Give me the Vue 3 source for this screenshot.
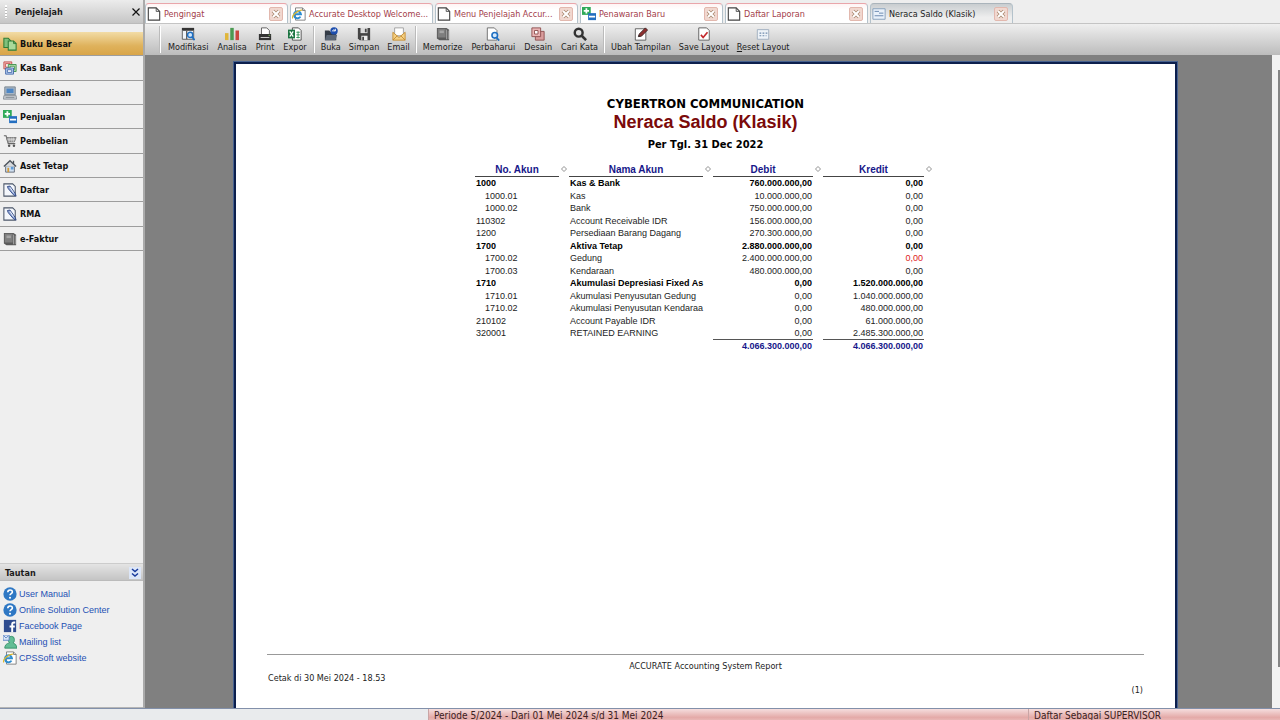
<script setup>
const menu = [
  ['Buku Besar', 'copy'],
  ['Kas Bank', 'cash'],
  ['Persediaan', 'computer'],
  ['Penjualan', 'plusminus'],
  ['Pembelian', 'cart'],
  ['Aset Tetap', 'house'],
  ['Daftar', 'listdoc'],
  ['RMA', 'listdoc'],
  ['e-Faktur', 'book'],
]
const links = [
  ['User Manual', 'help'],
  ['Online Solution Center', 'help'],
  ['Facebook Page', 'facebook'],
  ['Mailing list', 'mail'],
  ['CPSSoft website', 'ie'],
]
const tabs = [
  { title: 'Pengingat', icon: 'page', close: true },
  { title: 'Accurate Desktop Welcome...', icon: 'ie', close: false },
  { title: 'Menu Penjelajah Accur...', icon: 'page', close: true },
  { title: 'Penawaran Baru', icon: 'plusminus', close: true },
  { title: 'Daftar Laporan', icon: 'page', close: true },
  { title: 'Neraca Saldo (Klasik)', icon: 'form', close: true, active: true },
]
const tools = [
  [['Modifikasi', 'modify'], ['Analisa', 'chart'], ['Print', 'print'], ['Expor', 'excel']],
  [['Buka', 'open'], ['Simpan', 'save'], ['Email', 'email']],
  [['Memorize', 'book'], ['Perbaharui', 'refresh'], ['Desain', 'design'], ['Cari Kata', 'search']],
  [['Ubah Tampilan', 'edit'], ['Save La', 'check', 'y', 'out'], ['', 'reset', 'R', 'eset Layout']],
]
const rows = [
  { no: '1000', name: 'Kas & Bank', d: '760.000.000,00', k: '0,00', bold: true },
  { no: '1000.01', name: 'Kas', d: '10.000.000,00', k: '0,00', child: true },
  { no: '1000.02', name: 'Bank', d: '750.000.000,00', k: '0,00', child: true },
  { no: '110302', name: 'Account Receivable IDR', d: '156.000.000,00', k: '0,00' },
  { no: '1200', name: 'Persediaan Barang Dagang', d: '270.300.000,00', k: '0,00' },
  { no: '1700', name: 'Aktiva Tetap', d: '2.880.000.000,00', k: '0,00', bold: true },
  { no: '1700.02', name: 'Gedung', d: '2.400.000.000,00', k: '0,00', child: true, red: true },
  { no: '1700.03', name: 'Kendaraan', d: '480.000.000,00', k: '0,00', child: true },
  { no: '1710', name: 'Akumulasi Depresiasi Fixed As', d: '0,00', k: '1.520.000.000,00', bold: true },
  { no: '1710.01', name: 'Akumulasi Penyusutan Gedung', d: '0,00', k: '1.040.000.000,00', child: true },
  { no: '1710.02', name: 'Akumulasi Penyusutan Kendaraa', d: '0,00', k: '480.000.000,00', child: true },
  { no: '210102', name: 'Account Payable IDR', d: '0,00', k: '61.000.000,00' },
  { no: '320001', name: 'RETAINED EARNING', d: '0,00', k: '2.485.300.000,00' },
]
</script>

<template>
  <div class="app">
    <svg class="defs" aria-hidden="true">
      <symbol id="i-copy" viewBox="0 0 16 16">
        <path d="M1 1.500h5l3 3V12H1z" fill="#7fc07c" stroke="#2f7d36" stroke-width="1.200" />
        <path d="M6 4.500h6l3 3V15H6z" fill="#a9d99a" stroke="#2f7d36" stroke-width="1.200" />
        <path d="M12 4.500v3h3" fill="none" stroke="#2f7d36" />
      </symbol>
      <symbol id="i-cash" viewBox="0 0 16 16">
        <path d="M1 1h9v8H1z" fill="#f5b7b4" stroke="#c0504d" />
        <path d="M3 3h5v4H3z" fill="#fff" stroke="#c0504d" />
        <path d="M6 4h9v8H6z" fill="#b8dfb3" stroke="#3c8f49" />
        <path d="M8 6h5v4H8z" fill="#fff" stroke="#3c8f49" />
        <path d="M3 8h9v7H3z" fill="#b9cdef" stroke="#3e66a8" />
        <path d="M5 10h5v3H5z" fill="#fff" stroke="#3e66a8" />
      </symbol>
      <symbol id="i-computer" viewBox="0 0 16 16">
        <path d="M2 1h12v9H2z" fill="#a9b6c4" stroke="#74808d" />
        <path d="M4 3h8v5H4z" fill="#4d86c4" />
        <path d="M1 11h14l.5 4H.5z" fill="#c9ced4" stroke="#858c94" />
        <path d="M3 13h10" stroke="#7d848c" />
      </symbol>
      <symbol id="i-plusminus" viewBox="0 0 16 16">
        <path d="M0 0h10v9H0z" fill="#2faa59" />
        <path d="M5 1.500v6M2 4.500h6" stroke="#fff" stroke-width="2" />
        <path d="M7 7h9v8H7z" fill="#246fc0" />
        <path d="M8 11h7" stroke="#fff" stroke-width="2" />
      </symbol>
      <symbol id="i-cart" viewBox="0 0 16 16">
        <path d="M1 2h2.500l2.500 9h8" fill="none" stroke="#666" stroke-width="1.300" />
        <path d="M4 4h11l-2 5H5.500z" fill="#a8a8a8" stroke="#777" />
        <path d="M7 4v5M10 4v5M12 4v5M5 6.500h9" stroke="#e4e4e4" stroke-width=".6" />
        <circle cx="7" cy="13.500" r="1.400" fill="#555" /><circle cx="12.500" cy="13.500" r="1.400" fill="#555" />
      </symbol>
      <symbol id="i-house" viewBox="0 0 16 16">
        <path d="M3 8h10v7H3z" fill="#cfdff0" stroke="#5c6470" />
        <path d="M1 8.500 8 2l7 6.500" fill="#d5d9dd" stroke="#4c535c" stroke-width="1.600" />
        <path d="M12 2v4" stroke="#4c535c" stroke-width="1.500" />
        <path d="M5 10h2v5H5z" fill="#d59a35" /><path d="M9 9h3v3H9z" fill="#5e9bd8" />
      </symbol>
      <symbol id="i-listdoc" viewBox="0 0 16 16">
        <path d="M1 1h10l3 3v11H1z" fill="#f4f7fc" stroke="#4b5668" stroke-width="1.200" />
        <path d="m5 4 3-.5 6 8.500 1 3-3-1.500-6-7z" fill="#8ea5d6" stroke="#2c4381" />
        <path d="m8 5 4 6" stroke="#fff" />
      </symbol>
      <symbol id="i-book" viewBox="0 0 16 16">
        <path d="m1 1 11 0 3 2v12H4l-3-2z" fill="#5a5a5a" />
        <path d="M2 2h9v10H2z" fill="#7e7e7e" /><path d="M4 4h5v3H4z" fill="#a5a5a5" />
        <path d="M12 3v11M14 4v10" stroke="#c5c5c5" stroke-width=".7" />
      </symbol>
      <symbol id="i-help" viewBox="0 0 16 16">
        <circle cx="8" cy="8" r="7.600" fill="#2f78c4" />
        <path d="M5.500 6c0-3.500 5.200-3.300 5.200-.4C10.700 7.500 8 7.500 8 9.500" fill="none" stroke="#fff" stroke-width="1.900" />
        <circle cx="8" cy="12.300" r="1.200" fill="#fff" />
      </symbol>
      <symbol id="i-facebook" viewBox="0 0 16 16">
        <path d="M1 1h14v14H1z" fill="#2f4c8f" />
        <path d="M14 4h-1.500Q10.500 4 10.500 6v9M7.500 8.500h6" fill="none" stroke="#fff" stroke-width="2.200" />
      </symbol>
      <symbol id="i-mail" viewBox="0 0 16 16">
        <path d="M6 5q0-3.500 3.500-3.500T13 5t-1.500 4q4 1 4.500 6H2q0-5 5.500-6Q6 8 6 5z" fill="#63bd95" stroke="#369069" />
        <path d="M0 0h7v6H0z" fill="#dce8fa" stroke="#557fc1" /><path d="m1 1 2.500 2.500L6 1" fill="none" stroke="#557fc1" />
      </symbol>
      <symbol id="i-ie" viewBox="0 0 16 16">
        <path d="M4 1h8l3 3v11H4z" fill="#fff" stroke="#777" /><path d="M12 1v3h3" fill="none" stroke="#777" />
        <path d="M9.700 11A4 4 0 1 1 10.200 8.300H3" fill="none" stroke="#2d8cd0" stroke-width="2.200" />
        <path d="M1 13C-1 10 7 3 11.500 3.500" fill="none" stroke="#dfb92e" stroke-width="1.400" />
      </symbol>
      <symbol id="i-page" viewBox="0 0 16 16">
        <path d="M1.500 1h9l4 4v10h-13z" fill="#fff" stroke="#444" stroke-width="1.300" /><path d="M10.500 1v4h4" fill="none" stroke="#444" />
      </symbol>
      <symbol id="i-form" viewBox="0 0 16 16">
        <path d="M1 2h14v12H1z" fill="#e9f1fa" stroke="#7f9ab8" />
        <path d="M3 5h5M3 10h10" stroke="#5b7ea8" /><path d="M8 7h5" stroke="#5b7ea8" />
      </symbol>
      <symbol id="i-modify" viewBox="0 0 16 16">
        <path d="M1 1h14v3H1z" fill="#333" /><path d="M1.500 4h5v10h-5zM6.500 4h8v10h-8z" fill="#f2f5f8" stroke="#555" />
        <circle cx="10.500" cy="9" r="3" fill="#cfe5fb" stroke="#1e6fc2" stroke-width="1.700" /><path d="m12.500 11 3 4" stroke="#1e6fc2" stroke-width="2" />
      </symbol>
      <symbol id="i-chart" viewBox="0 0 16 16">
        <path d="M0 7h4v8H0z" fill="#e0b63b" /><path d="M6 1h4v14H6z" fill="#4b9a52" /><path d="M12 4h4v11h-4z" fill="#c9483f" />
      </symbol>
      <symbol id="i-print" viewBox="0 0 16 16">
        <path d="M4 8V1h6l3 3v4" fill="#fff" stroke="#555" /><path d="M1 8h14v7H1z" fill="#333" />
        <path d="M3 12h10" stroke="#ddd" /><path d="M12 9.500h2" stroke="#77b85c" />
      </symbol>
      <symbol id="i-excel" viewBox="0 0 16 16">
        <path d="M5 1h7l3 3v11H5z" fill="#fff" stroke="#444" /><path d="M0 3h8v10H0z" fill="#1c7442" />
        <path d="m2 5 4 6M6 5l-4 6" stroke="#fff" stroke-width="1.400" /><path d="M9.500 6h4M9.500 9h4M9.500 12h4M11.500 5v8" stroke="#2b8f54" />
      </symbol>
      <symbol id="i-open" viewBox="0 0 16 16">
        <path d="M1 4h5l2 2h6v9H1z" fill="#343b46" /><path d="M3 9h12l-2 6H1z" fill="#5b6675" />
        <circle cx="11.500" cy="4.500" r="4.200" fill="#1d4eae" /><path d="M9 5q2-3 4-1M13 2v2.500h-2.500" fill="none" stroke="#fff" />
      </symbol>
      <symbol id="i-save" viewBox="0 0 16 16">
        <path d="M1 1h14v14H3l-2-2z" fill="#454545" /><path d="M4 1h8v6H4z" fill="#ddd" /><path d="M5 10h7v5H5z" fill="#eee" /><path d="M6 11h2v4H6z" fill="#444" /><path d="M9 2h2v4H9z" fill="#444" />
      </symbol>
      <symbol id="i-email" viewBox="0 0 16 16">
        <path d="M3 1h10v9H3z" fill="#fff" stroke="#9b9b9b" /><path d="M1 6v9h14V6l-7 6z" fill="#f3cf83" stroke="#c58b2f" /><path d="m1 15 5-5M15 15l-5-5" stroke="#c58b2f" />
      </symbol>
      <symbol id="i-refresh" viewBox="0 0 16 16">
        <path d="M1.500 1h8l3 3v11h-11z" fill="#fff" stroke="#666" /><circle cx="10" cy="9.500" r="3.200" fill="#d6e9fb" stroke="#1e6fc2" stroke-width="1.800" /><path d="m12 12 3 3.500" stroke="#1e6fc2" stroke-width="2" />
      </symbol>
      <symbol id="i-design" viewBox="0 0 16 16">
        <path d="M5 5h10v10H5z" fill="#d99c9c" stroke="#8a4a4a" /><path d="M1 1h10v10H1z" fill="#eab5b5" stroke="#8a4a4a" /><path d="M4 4h4v4H4z" fill="#fff" stroke="#8a4a4a" />
      </symbol>
      <symbol id="i-search" viewBox="0 0 16 16">
        <circle cx="6.500" cy="6.500" r="4.500" fill="none" stroke="#333" stroke-width="2.800" /><path d="m10 10 5 5" stroke="#333" stroke-width="3" />
      </symbol>
      <symbol id="i-edit" viewBox="0 0 16 16">
        <path d="M1.500 2h12v13h-12z" fill="#fff" stroke="#555" /><path d="m5 11 1-3 7-7 2.500 2.500-7 7z" fill="#8e2f2f" stroke="#3b2323" /><path d="m5 11 2-.5-1.500-1.500z" fill="#222" />
      </symbol>
      <symbol id="i-check" viewBox="0 0 16 16">
        <path d="M2 1h9l3 3v11H2z" fill="#fff" stroke="#555" /><path d="m4.500 9 2.500 3 5-6" fill="none" stroke="#c3272b" stroke-width="1.900" />
      </symbol>
      <symbol id="i-reset" viewBox="0 0 16 16">
        <path d="M1.500 3h13v11h-13z" fill="#eef3f8" stroke="#9cacbd" /><path d="M4 7h2M4 10h2M7.500 7h2M7.500 10h2M11 7h2M11 10h1" stroke="#6c89ab" stroke-width="1.300" />
      </symbol>
    </svg>

    <aside class="side">
      <header class="side-head">
        <span class="grip"></span>
        <h2>Penjelajah</h2>
        <button class="side-close" aria-label="Tutup">
          <svg viewBox="0 0 8 8"><path d="m.5.5 7 7M7.500.5l-7 7" stroke="#111" stroke-width="1.200" /></svg>
        </button>
      </header>
      <nav class="menu">
        <button v-for="(m, i) in menu" :key="m[0]" :class="{ on: i === 0 }">
          <svg class="ico"><use :href="'#i-' + m[1]" /></svg>{{ m[0] }}
        </button>
      </nav>
      <section class="links">
        <header class="links-head">
          <h2>Tautan</h2>
          <button aria-label="Ciutkan">
            <svg viewBox="0 0 10 10"><path d="m2 1 3 2.500L8 1M2 5.500 5 8l3-2.500" fill="none" stroke="#183a9c" stroke-width="1.500" /></svg>
          </button>
        </header>
        <a v-for="l in links" :key="l[0]" href="#"><svg class="ico"><use :href="'#i-' + l[1]" /></svg>{{ l[0] }}</a>
      </section>
    </aside>

    <main class="main">
      <div class="tabs">
        <div v-for="t in tabs" :key="t.title" class="tab" :class="{ active: t.active }">
          <button class="tab-title"><svg class="ico"><use :href="'#i-' + t.icon" /></svg>{{ t.title }}</button>
          <button v-if="t.close" class="tab-close" aria-label="Tutup tab">
            <svg viewBox="0 0 10 10"><path d="m2 2 6 6M8 2 2 8" stroke="#a98a72" stroke-width="3.600" /><path d="m2 2 6 6M8 2 2 8" stroke="#fff" stroke-width="2" /></svg>
          </button>
        </div>
      </div>
      <div class="toolbar">
        <div v-for="(g, i) in tools" :key="i" class="group">
          <button v-for="b in g" :key="b[1]">
            <svg><use :href="'#i-' + b[1]" /></svg>
            <span>{{ b[0] }}<u v-if="b[2]">{{ b[2] }}</u>{{ b[3] }}</span>
          </button>
        </div>
      </div>
      <div class="work">
        <div class="desk">
          <article class="paper">
            <p class="company">CYBERTRON COMMUNICATION</p>
            <h1>Neraca Saldo (Klasik)</h1>
            <p class="period">Per Tgl. 31 Dec 2022</p>
            <table>
              <colgroup><col class="c1" /><col class="c2" /><col class="c3" /><col class="c4" /></colgroup>
              <thead>
                <tr>
                  <th v-for="h in ['No. Akun', 'Nama Akun', 'Debit', 'Kredit']" :key="h">
                    <div>{{ h }}</div>
                    <svg viewBox="0 0 6 6"><path d="m3 .5 2.500 2.500L3 5.500.5 3z" fill="#fff" stroke="#777" stroke-width=".8" /></svg>
                  </th>
                </tr>
              </thead>
              <tbody>
                <tr v-for="r in rows" :key="r.no" :class="{ bold: r.bold }">
                  <td :class="{ child: r.child }">{{ r.no }}</td>
                  <td>{{ r.name }}</td>
                  <td class="num">{{ r.d }}</td>
                  <td class="num" :class="{ red: r.red }">{{ r.k }}</td>
                </tr>
              </tbody>
              <tfoot>
                <tr>
                  <td></td>
                  <td></td>
                  <td><div>4.066.300.000,00</div></td>
                  <td><div>4.066.300.000,00</div></td>
                </tr>
              </tfoot>
            </table>
            <footer>
              <p class="system">ACCURATE Accounting System Report</p>
              <p>Cetak di 30 Mei 2024 - 18.53</p>
              <p class="pageno">(1)</p>
            </footer>
          </article>
        </div>
        <div class="scroll"><div class="thumb"></div></div>
      </div>
    </main>

    <footer class="status">
      <span class="s1"></span>
      <span class="s2">Periode 5/2024 - Dari 01 Mei 2024 s/d 31 Mei 2024</span>
      <span class="s3">Daftar Sebagai SUPERVISOR</span>
    </footer>
  </div>
</template>

<style>
body {
  margin: 0;
  overflow: hidden;
}
</style>

<style scoped>
.app {
  display: grid;
  grid-template-columns: 145px minmax(0, 1fr);
  grid-template-rows: minmax(0, 1fr) 12px;
  height: 100vh;
  background: #eee;
  color: #1c1c1c;
  font: 9px/12px "DejaVu Sans Condensed", "DejaVu Sans", sans-serif;
}
.defs {
  position: absolute;
  width: 0;
  height: 0;
}
button {
  border: 0;
  padding: 0;
  background: none;
  color: inherit;
  font: inherit;
}
h1, h2, p {
  margin: 0;
}
h2 {
  font-size: 9px;
  font-weight: bold;
  line-height: 12px;
}
.ico {
  width: 14px;
  height: 14px;
  flex: none;
}

/* sidebar */
.side {
  display: flex;
  flex-direction: column;
  border-right: 2px solid #aaa;
  background: #efefef;
}
.side-head {
  display: flex;
  align-items: center;
  height: 23px;
  padding: 0 3px 0 5px;
  border-bottom: 1px solid #bbb;
  background: linear-gradient(#ececec, #c6c6c6);
}
.grip {
  width: 2px;
  height: 13px;
  margin-right: 8px;
  background: repeating-linear-gradient(#fff 0 2px, #bbb 2px 3px);
}
.side-close {
  display: flex;
  margin-left: auto;
}
.side-close svg {
  width: 8px;
  height: 8px;
}
.menu {
  display: grid;
  grid-auto-rows: 1fr;
  height: 219px;
  margin-top: 8px;
}
.menu button {
  display: flex;
  align-items: center;
  gap: 3px;
  padding: 1px 0 0 3px;
  border-bottom: 1px solid #9d9d9d;
  color: #111;
  font-weight: bold;
}
.menu .on {
  background: linear-gradient(#f2dca6, #dfb25c 60%, #d9a548);
}
.links {
  height: 144px;
  margin-top: auto;
  border-bottom: 1px solid #b5b5b5;
}
.links-head {
  display: flex;
  align-items: center;
  justify-content: space-between;
  height: 15px;
  margin-bottom: 5px;
  padding: 1px 2px 0 5px;
  border-top: 1px solid #ccc;
  border-bottom: 1px solid #bbb;
  background: linear-gradient(#e4e4e4, #c4c4c4);
}
.links-head button {
  display: flex;
  padding: 1px;
  background: #dce6f8;
}
.links-head svg {
  width: 10px;
  height: 10px;
}
.links a {
  display: flex;
  align-items: center;
  gap: 2px;
  height: 16px;
  padding-left: 3px;
  color: #2450b4;
  font-family: "Liberation Sans", sans-serif;
  text-decoration: none;
}

/* tabs and toolbar */
.main {
  display: flex;
  flex-direction: column;
  min-width: 0;
}
.tabs {
  display: flex;
  gap: 2px;
  height: 20px;
  padding-top: 3px;
  border-bottom: 1px solid #c4c4c4;
}
.tab {
  display: flex;
  align-items: center;
  justify-content: space-between;
  box-sizing: border-box;
  flex: 0 1 143px;
  min-width: 0;
  padding: 1px 4px 0 1px;
  border: 1px solid #b4c2cb;
  border-top-color: #e9a5aa;
  border-bottom: 0;
  border-radius: 4px 4px 0 0;
  background: linear-gradient(#fff4f4, #fff 30%, #fff);
  color: #a3404a;
}
.tab.active {
  border-top-color: #aab4bb;
  background: linear-gradient(#c9cdd0, #eee 70%);
  color: #222;
}
.tab-title {
  display: flex;
  align-items: center;
  gap: 3px;
  white-space: nowrap;
}
.tab-close {
  display: flex;
  padding: 1px;
  border: 1px solid #e2b8ae;
  border-radius: 2px;
  background: #f1d8d0;
}
.tab-close svg {
  width: 10px;
  height: 10px;
}
.toolbar {
  display: flex;
  height: 31px;
  padding-left: 15px;
  background: linear-gradient(#efefef, #bcbcbc);
}
.group {
  display: flex;
  gap: 8px;
  margin: 2px 0;
  padding: 1px 6px 0;
  border-left: 1px solid #fff;
  box-shadow: -1px 0 #bbb;
}
.group:nth-child(odd) {
  gap: 9px;
}
.group:first-child {
  padding: 1px 7px 0;
}
.group button {
  display: flex;
  flex-direction: column;
  align-items: center;
  white-space: nowrap;
}
.group button svg {
  width: 14px;
  height: 14px;
}

/* report */
.work {
  display: flex;
  flex: 1;
  min-height: 0;
  background: #808080;
}
.desk {
  display: flex;
  flex: 1;
  padding: 7px 95px 0 89px;
}
.paper {
  display: flex;
  flex: 1;
  flex-direction: column;
  align-items: center;
  padding: 32px 31px 12px;
  border: 2px solid #0c1f4d;
  border-bottom: 0;
  box-shadow: 0 0 0 1px #46618f;
  background: #fff;
}
.company {
  color: #000;
  font-size: 13px;
  font-weight: bold;
  line-height: 16px;
}
h1 {
  color: #7b0a0a;
  font: bold 18px/20px "Liberation Sans", sans-serif;
}
.period {
  margin-top: 5px;
  color: #000;
  font-size: 11px;
  font-weight: bold;
  line-height: 16px;
}
table {
  width: 459px;
  margin: 10px 2px 0 0;
  border-collapse: collapse;
  table-layout: fixed;
  font: 9px/12px "Liberation Sans", sans-serif;
}
.c1 { width: 94px; }
.c2 { width: 144px; }
.c3 { width: 110px; }
.c4 { width: 111px; }
th {
  position: relative;
  padding: 0 10px 0 0;
  color: #17178a;
  font-size: 10px;
}
th div {
  border-bottom: 1px solid #444;
  line-height: 13px;
}
th svg {
  position: absolute;
  top: 3px;
  right: 2px;
  width: 6px;
  height: 6px;
}
td {
  height: 12px;
  padding: 0 11px 0 1px;
  overflow: hidden;
  white-space: nowrap;
}
tbody tr:nth-child(even) td {
  height: 13px;
}
td.child {
  padding-left: 10px;
}
.num, tfoot td {
  text-align: right;
}
.bold {
  color: #000;
  font-weight: bold;
}
.red {
  color: #d22;
}
tfoot td {
  padding: 0 10px 0 0;
  color: #17178a;
  font-weight: bold;
}
tfoot div {
  padding-right: 1px;
  border-top: 1px solid #555;
}
.paper footer {
  align-self: stretch;
  margin-top: auto;
  padding: 5px 1px 0;
  border-top: 1px solid #999;
}
.system {
  text-align: center;
}
.pageno {
  text-align: right;
}
.scroll {
  display: flex;
  justify-content: flex-end;
  width: 8px;
  padding: 15px 0 41px;
  box-sizing: border-box;
  background: #f2f2f2;
}
.thumb {
  width: 2px;
  background: #858585;
}

/* status bar */
.status {
  display: grid;
  grid-column: 1 / -1;
  grid-template-columns: 428px minmax(0, 1fr) 252px;
  border-top: 1px solid #8290aa;
  font-size: 10px;
  line-height: 14px;
  white-space: nowrap;
  overflow: hidden;
}
.s1 {
  background: #e9ebed;
}
.s2, .s3 {
  padding-left: 5px;
  border-left: 1px solid #c9a5a5;
  background: linear-gradient(#f5dede, #e4aaa8 60%, #efc6c4);
  color: #3a2020;
}
</style>
